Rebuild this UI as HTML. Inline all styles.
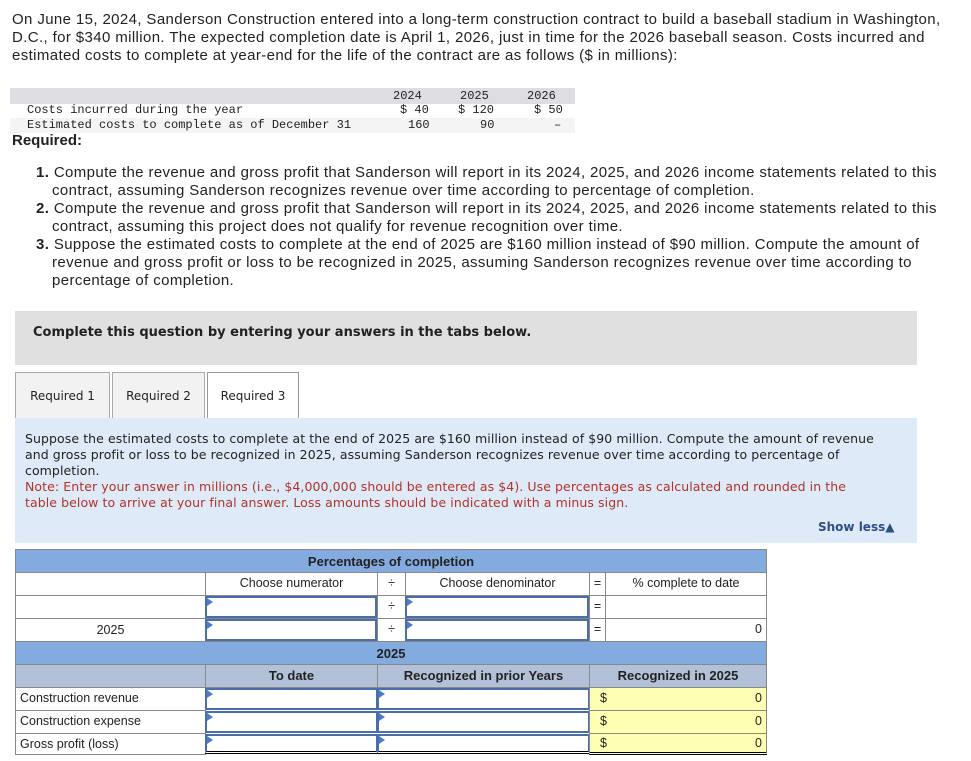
<!DOCTYPE html>
<html><head><meta charset="utf-8"><style>
body{margin:0;width:971px;height:761px;background:#fff;position:relative;font-family:"Liberation Sans",Arial,sans-serif;color:#222;overflow:hidden}
.a{position:absolute}
.p{font-size:15px;line-height:18px;color:#222;letter-spacing:0.38px}
.mono{font-family:"Liberation Mono",monospace;font-size:12px;line-height:15px;color:#222}
.v{font-family:"DejaVu Sans",Verdana,sans-serif;font-size:12.5px}
.tab{position:absolute;top:372px;height:46px;background:#f2f2f2;border:1px solid #aaa;border-bottom:none;box-sizing:border-box;font-family:"DejaVu Sans",Verdana,sans-serif;font-size:12px;text-align:center;line-height:46px;color:#222}
.c{position:absolute;box-sizing:border-box;border:1px solid #888;font-size:12.5px;line-height:21px;text-align:center;color:#222}
.in{position:absolute;box-sizing:border-box;border:2px solid #4a6fa8;background:#fff}
.in:before{content:"";position:absolute;left:0;top:0;border-left:6px solid #4a7bd0;border-top:4px solid transparent;border-bottom:4px solid transparent}
</style></head><body>
<div class="a p" style="left:12px;top:11px;width:945px">On June 15, 2024, Sanderson Construction entered into a long-term construction contract to build a baseball stadium in Washington, D.C., for $340 million. The expected completion date is April 1, 2026, just in time for the 2026 baseball season. Costs incurred and estimated costs to complete at year-end for the life of the contract are as follows ($ in millions):</div>
<div class="a" style="left:10px;top:88px;width:565px;height:16px;background:#dcdee3"></div>
<div class="a" style="left:10px;top:118px;width:565px;height:15px;background:#f4f4f4"></div>
<div class="a mono" style="left:393px;top:89px">2024</div>
<div class="a mono" style="left:460px;top:89px">2025</div>
<div class="a mono" style="left:527px;top:89px">2026</div>
<div class="a mono" style="left:27px;top:103px">Costs incurred during the year</div>
<div class="a mono" style="left:400px;top:103px">$ 40</div>
<div class="a mono" style="left:458px;top:103px">$ 120</div>
<div class="a mono" style="left:534px;top:103px">$ 50</div>
<div class="a mono" style="left:27px;top:118px">Estimated costs to complete as of December 31</div>
<div class="a mono" style="left:408px;top:118px">160</div>
<div class="a mono" style="left:480px;top:118px">90</div>
<div class="a mono" style="left:554px;top:118px">–</div>
<div class="a" style="left:12px;top:132px;font-size:15px;font-weight:bold">Required:</div>
<div class="a p" style="left:36px;top:164px;width:910px">
<div style="padding-left:16px;text-indent:-16px"><b>1.</b> Compute the revenue and gross profit that Sanderson will report in its 2024, 2025, and 2026 income statements related to this contract, assuming Sanderson recognizes revenue over time according to percentage of completion.</div>
<div style="padding-left:16px;text-indent:-16px"><b>2.</b> Compute the revenue and gross profit that Sanderson will report in its 2024, 2025, and 2026 income statements related to this contract, assuming this project does not qualify for revenue recognition over time.</div>
<div style="padding-left:16px;text-indent:-16px"><b>3.</b> Suppose the estimated costs to complete at the end of 2025 are $160 million instead of $90 million. Compute the amount of revenue and gross profit or loss to be recognized in 2025, assuming Sanderson recognizes revenue over time according to percentage of completion.</div>
</div>
<div class="a" style="left:15px;top:311px;width:902px;height:54px;background:#e0e0e0"></div>
<div class="a v" style="left:33px;top:325px;font-weight:bold;font-size:13px">Complete this question by entering your answers in the tabs below.</div>
<div class="tab" style="left:15px;width:95px">Required 1</div>
<div class="tab" style="left:112px;width:93px">Required 2</div>
<div class="tab" style="left:207px;width:92px;background:#fff;border-color:#999;height:47px">Required 3</div>
<div class="a" style="left:15px;top:418px;width:902px;height:125px;background:#deeaf7"></div>
<div class="a v" style="left:25px;top:431px;width:852px;line-height:16px;color:#222;letter-spacing:0.08px">Suppose the estimated costs to complete at the end of 2025 are $160 million instead of $90 million. Compute the amount of revenue and gross profit or loss to be recognized in 2025, assuming Sanderson recognizes revenue over time according to percentage of completion.<div style="color:#b0342a">Note: Enter your answer in millions (i.e., $4,000,000 should be entered as $4). Use percentages as calculated and rounded in the table below to arrive at your final answer. Loss amounts should be indicated with a minus sign.</div></div>
<div class="a v" style="left:818px;top:520px;font-weight:bold;font-size:12px;color:#2c4f86">Show less▲</div>

<div class="c" style="left:15px;top:549px;width:752px;height:24px;background:#84abdf;font-weight:bold;font-size:13px;line-height:24px">Percentages of completion</div>
<div class="c" style="left:15px;top:572px;width:191px;height:24px"></div>
<div class="c" style="left:205px;top:572px;width:173px;height:24px">Choose numerator</div>
<div class="c" style="left:377px;top:572px;width:29px;height:24px">÷</div>
<div class="c" style="left:405px;top:572px;width:185px;height:24px">Choose denominator</div>
<div class="c" style="left:589px;top:572px;width:17px;height:24px">=</div>
<div class="c" style="left:605px;top:572px;width:162px;height:24px">% complete to date</div>

<div class="c" style="left:15px;top:595px;width:191px;height:24px"></div>
<div class="c" style="left:205px;top:595px;width:173px;height:24px"></div><div class="in" style="left:205px;top:596px;width:172px;height:22px"></div>
<div class="c" style="left:377px;top:595px;width:29px;height:24px">÷</div>
<div class="c" style="left:405px;top:595px;width:185px;height:24px"></div><div class="in" style="left:405px;top:596px;width:184px;height:22px"></div>
<div class="c" style="left:589px;top:595px;width:17px;height:24px">=</div>
<div class="c" style="left:605px;top:595px;width:162px;height:24px"></div>

<div class="c" style="left:15px;top:618px;width:191px;height:24px;line-height:23px">2025</div>
<div class="c" style="left:205px;top:618px;width:173px;height:24px"></div><div class="in" style="left:205px;top:619px;width:172px;height:22px"></div>
<div class="c" style="left:377px;top:618px;width:29px;height:24px">÷</div>
<div class="c" style="left:405px;top:618px;width:185px;height:24px"></div><div class="in" style="left:405px;top:619px;width:184px;height:22px"></div>
<div class="c" style="left:589px;top:618px;width:17px;height:24px">=</div>
<div class="c" style="left:605px;top:618px;width:162px;height:24px;text-align:right;padding-right:4px">0</div>

<div class="c" style="left:15px;top:641px;width:752px;height:24px;background:#84abdf;font-weight:bold;font-size:13px;line-height:24px">2025</div>
<div class="c" style="left:15px;top:664px;width:191px;height:24px;background:#b3c1d8"></div>
<div class="c" style="left:205px;top:664px;width:173px;height:24px;background:#b3c1d8;font-weight:bold;font-size:13px">To date</div>
<div class="c" style="left:377px;top:664px;width:213px;height:24px;background:#b3c1d8;font-weight:bold;font-size:13px">Recognized in prior Years</div>
<div class="c" style="left:589px;top:664px;width:178px;height:24px;background:#b3c1d8;font-weight:bold;font-size:13px">Recognized in 2025</div>

<div class="c" style="left:15px;top:687px;width:191px;height:24px;text-align:left;padding-left:4px">Construction revenue</div>
<div class="in" style="left:205px;top:688px;width:173px;height:22px"></div>
<div class="in" style="left:377px;top:688px;width:213px;height:22px"></div>
<div class="c" style="left:589px;top:687px;width:178px;height:24px;background:#ffffb3;text-align:right;padding-right:4px"><span style="float:left;padding-left:10px">$</span>0</div>

<div class="c" style="left:15px;top:710px;width:191px;height:24px;text-align:left;padding-left:4px">Construction expense</div>
<div class="in" style="left:205px;top:711px;width:173px;height:22px"></div>
<div class="in" style="left:377px;top:711px;width:213px;height:22px"></div>
<div class="c" style="left:589px;top:710px;width:178px;height:24px;background:#ffffb3;text-align:right;padding-right:4px;border-bottom:1px solid #000"><span style="float:left;padding-left:10px">$</span>0</div>

<div class="c" style="left:15px;top:733px;width:191px;height:22px;text-align:left;padding-left:4px">Gross profit (loss)</div>
<div class="in" style="left:205px;top:734px;width:173px;height:20px;border-bottom:3px double #000"></div>
<div class="in" style="left:377px;top:734px;width:213px;height:20px;border-bottom:3px double #000"></div>
<div class="c" style="left:589px;top:733px;width:178px;height:22px;background:#ffffb3;text-align:right;padding-right:4px;border-bottom:3px double #000;line-height:19px"><span style="float:left;padding-left:10px">$</span>0</div>
</body></html>
